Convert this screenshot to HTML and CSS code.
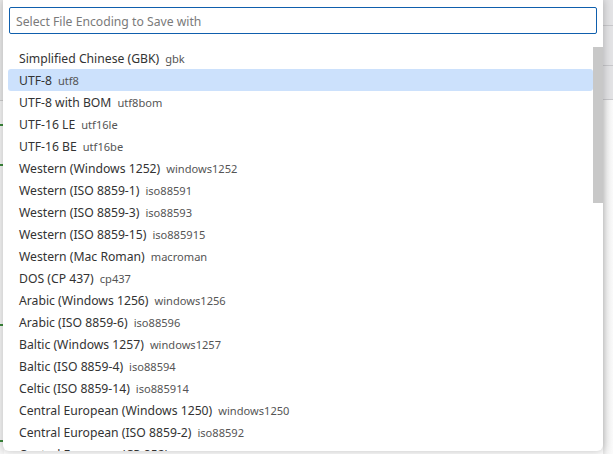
FILE: index.html
```html
<!DOCTYPE html>
<html>
<head>
<meta charset="utf-8">
<link rel="stylesheet" href="styles.css">
</head>
<body>
<div class="backdrop">
  <div class="gutter">
    <div class="g-top"></div>
    <div class="g-body">
      <span class="mark m1"></span>
      <span class="mark m2"></span>
      <span class="mark m3"></span>
      <span class="mark m4"></span>
    </div>
  </div>
  <div class="editor"></div>
  <div class="side">
    <div class="tab"></div>
    <div class="tab t2"></div>
    <div class="tab t3"></div>
    <div class="side-rest"></div>
  </div>
</div>

<div class="quick-pick">
  <div class="input-wrap">
    <div class="input">Select File Encoding to Save with</div>
  </div>
  <ul class="list">
    <li class="row"><span class="label">Simplified Chinese (GBK)</span><span class="desc">gbk</span></li>
    <li class="row focused"><span class="label">UTF-8</span><span class="desc">utf8</span></li>
    <li class="row"><span class="label">UTF-8 with BOM</span><span class="desc">utf8bom</span></li>
    <li class="row"><span class="label">UTF-16 LE</span><span class="desc">utf16le</span></li>
    <li class="row"><span class="label">UTF-16 BE</span><span class="desc">utf16be</span></li>
    <li class="row"><span class="label">Western (Windows 1252)</span><span class="desc">windows1252</span></li>
    <li class="row"><span class="label">Western (ISO 8859-1)</span><span class="desc">iso88591</span></li>
    <li class="row"><span class="label">Western (ISO 8859-3)</span><span class="desc">iso88593</span></li>
    <li class="row"><span class="label">Western (ISO 8859-15)</span><span class="desc">iso885915</span></li>
    <li class="row"><span class="label">Western (Mac Roman)</span><span class="desc">macroman</span></li>
    <li class="row"><span class="label">DOS (CP 437)</span><span class="desc">cp437</span></li>
    <li class="row"><span class="label">Arabic (Windows 1256)</span><span class="desc">windows1256</span></li>
    <li class="row"><span class="label">Arabic (ISO 8859-6)</span><span class="desc">iso88596</span></li>
    <li class="row"><span class="label">Baltic (Windows 1257)</span><span class="desc">windows1257</span></li>
    <li class="row"><span class="label">Baltic (ISO 8859-4)</span><span class="desc">iso88594</span></li>
    <li class="row"><span class="label">Celtic (ISO 8859-14)</span><span class="desc">iso885914</span></li>
    <li class="row"><span class="label">Central European (Windows 1250)</span><span class="desc">windows1250</span></li>
    <li class="row"><span class="label">Central European (ISO 8859-2)</span><span class="desc">iso88592</span></li>
    <li class="row"><span class="label">Central European (CP 852)</span><span class="desc">cp852</span></li>
  </ul>
  <div class="scrollbar"></div>
</div>
</body>
</html>
```

FILE: styles.css
```css
html, body {
  margin: 0;
  padding: 0;
  width: 613px;
  height: 454px;
  overflow: hidden;
  background: #ffffff;
  font-family: "Segoe UI", "Noto Sans", "Liberation Sans", sans-serif;
}

.backdrop {
  display: flex;
  width: 613px;
  height: 454px;
}

.gutter {
  width: 4px;
  display: flex;
  flex-direction: column;
  background: #f7f7f7;
}
.g-top {
  height: 100px;
  background: #ececec;
  border-bottom: 1px solid #d0d0d0;
}
.g-body {
  position: relative;
  flex: 1;
}
.mark {
  position: absolute;
  left: 0;
  width: 3px;
  height: 2px;
  background: #3c8a3c;
}
.m1 { top: 23px; }
.m2 { top: 63px; }
.m3 { top: 223px; }
.m4 { top: 339px; }

.editor {
  flex: 1;
  background: #ffffff;
}

.side {
  width: 10px;
  display: flex;
  flex-direction: column;
}
.tab {
  height: 25px;
  background: #e4e4e6;
  border-bottom: 1px solid #c9c9cc;
}
.t2 { height: 39px; }
.t3 { height: 33px; }
.side-rest {
  flex: 1;
  background: linear-gradient(to right, #e6e6e6 0px, #f4f4f4 4px, #fbfbfb 10px);
}

.quick-pick {
  position: absolute;
  left: 3px;
  top: 0;
  width: 600px;
  height: 451px;
  background: #ffffff;
  border-radius: 0 0 6px 6px;
  box-shadow: 0 0 8px 1px rgba(0, 0, 0, 0.22);
  overflow: hidden;
}

.input-wrap {
  padding: 7px 6px 0 6px;
}
.input {
  box-sizing: border-box;
  height: 27px;
  width: 588px;
  border: 1px solid #0f5fad;
  border-radius: 2px;
  padding: 2px 6px 0 6px;
  font-size: 12.2px;
  line-height: 23px;
  color: #7a7a7a;
}

.list {
  list-style: none;
  margin: 13px 0 0 5px;
  padding: 0;
  width: 585px;
}
.row {
  height: 20px;
  padding: 2px 0 0 11px;
  line-height: 20px;
  border-radius: 3px;
  white-space: nowrap;
  font-size: 12.2px;
  color: #3a3a3a;
}
.row.focused {
  background: #cce1fc;
}
.label {
  color: #333333;
}
.desc {
  margin-left: 6px;
  font-size: 11.1px;
  color: #555555;
}

.scrollbar {
  position: absolute;
  right: 0;
  top: 47px;
  width: 10px;
  height: 156px;
  background: #c8c8c8;
}
```
